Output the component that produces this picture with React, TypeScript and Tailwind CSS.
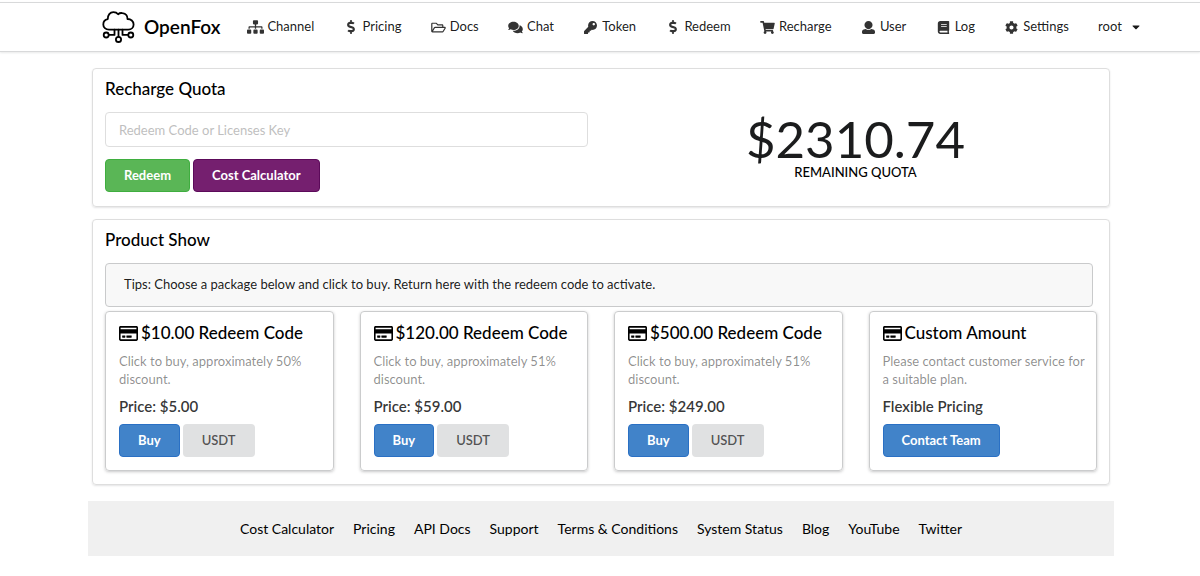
import { useState } from "react";
import {
  FaBook,
  FaCaretDown,
  FaCog,
  FaComments,
  FaDollarSign,
  FaKey,
  FaRegCreditCard,
  FaRegFolderOpen,
  FaShoppingCart,
  FaSitemap,
} from "react-icons/fa";

function UserIcon({ className }: { className?: string }) {
  return (
    <svg viewBox="0 0 512 512" fill="currentColor" className={className}>
      <path d="M256 0c88.366 0 160 71.634 160 160s-71.634 160-160 160S96 248.366 96 160 167.634 0 256 0zm183.283 333.821l-71.313-17.828c-74.923 53.89-165.738 41.864-223.94 0l-71.313 17.828C29.981 344.505 0 382.903 0 426.955V464c0 26.51 21.49 48 48 48h416c26.51 0 48-21.49 48-48v-37.045c0-44.052-29.981-82.45-72.717-93.134z" />
    </svg>
  );
}

const navItems = [
  { label: "Channel", icon: FaSitemap, size: "h-[14px] w-[17px]" },
  { label: "Pricing", icon: FaDollarSign, size: "h-[14px] w-[14px]" },
  { label: "Docs", icon: FaRegFolderOpen, size: "h-[13px] w-[15px]" },
  { label: "Chat", icon: FaComments, size: "h-[13px] w-[15px]" },
  { label: "Token", icon: FaKey, size: "h-[13px] w-[13px]" },
  { label: "Redeem", icon: FaDollarSign, size: "h-[14px] w-[14px]" },
  { label: "Recharge", icon: FaShoppingCart, size: "h-[13px] w-[15px]" },
  { label: "User", icon: UserIcon, size: "h-[13px] w-[13px]" },
  { label: "Log", icon: FaBook, size: "h-[13px] w-[13px]" },
  { label: "Settings", icon: FaCog, size: "h-[13px] w-[13px]" },
];

const products = [
  {
    title: "$10.00 Redeem Code",
    desc: "Click to buy, approximately 50% discount.",
    price: "Price: $5.00",
    actions: ["Buy", "USDT"],
  },
  {
    title: "$120.00 Redeem Code",
    desc: "Click to buy, approximately 51% discount.",
    price: "Price: $59.00",
    actions: ["Buy", "USDT"],
  },
  {
    title: "$500.00 Redeem Code",
    desc: "Click to buy, approximately 51% discount.",
    price: "Price: $249.00",
    actions: ["Buy", "USDT"],
  },
  {
    title: "Custom Amount",
    desc: "Please contact customer service for a suitable plan.",
    price: "Flexible Pricing",
    actions: ["Contact Team"],
  },
];

const footerLinks = [
  "Cost Calculator",
  "Pricing",
  "API Docs",
  "Support",
  "Terms & Conditions",
  "System Status",
  "Blog",
  "YouTube",
  "Twitter",
];

function Logo() {
  return (
    <svg
      viewBox="0 0 33 33"
      className="h-[33px] w-[33px] shrink-0"
      fill="none"
      stroke="#000"
      strokeWidth="1.8"
      strokeLinecap="round"
      strokeLinejoin="round"
    >
      <path d="M7 18.6C3.6 18.6 1.3 16.4 1.3 13.4C1.3 10.6 3.2 8.6 5.8 8.1C5.6 4 8 1.1 11.4 1.1C13.4 1.1 15 1.8 16.1 3.2C17.3 2.2 18.8 1.8 20.4 2.1C23.6 2.6 25.6 5 25.5 8C28.9 7.9 31.6 10.3 31.6 13.5C31.6 16.5 29.4 18.6 26.2 18.6Z" />
      <path d="M16.5 18.6V25.6M12.5 18.6V23.9H7M20.5 18.6V23.9H26" />
      <circle cx="4.2" cy="24" r="2.5" />
      <circle cx="28.8" cy="24" r="2.5" />
      <circle cx="16.5" cy="28.4" r="2.6" />
    </svg>
  );
}

function ActionButton({ label }: { label: string }) {
  if (label === "USDT") {
    return (
      <button
        type="button"
        className="h-[33px] rounded-[4px] bg-[#e0e1e2] px-[19px] text-[13px] font-semibold text-black/65 hover:bg-[#cacbcd]"
      >
        {label}
      </button>
    );
  }
  return (
    <button
      type="button"
      className="h-[33px] rounded-[4px] border border-[#2a70c4] bg-[#4183c9] px-[18px] text-[13px] font-bold text-white hover:bg-[#2a70c4]"
    >
      {label}
    </button>
  );
}

export default function App() {
  const [code, setCode] = useState("");

  return (
    <div className="bg-white pt-0.5 font-[Lato,sans-serif] text-[13px] text-black/90">
      <header className="border-y border-[#d8d9da] shadow-[0_1px_2px_rgba(34,36,38,0.1)]">
        <nav className="mx-auto flex h-12 max-w-[1084px] items-center pl-11">
          <a href="#" className="mr-7 flex items-center gap-[9px]">
            <Logo />
            <span className="text-[19px] font-semibold text-black">
              OpenFox
            </span>
          </a>
          <div className="flex flex-1 items-center justify-between">
            {navItems.map(({ label, icon: Icon, size }) => (
              <a key={label} href="#" className="flex items-center gap-1">
                <span className="flex w-[15px] justify-center text-black/80">
                  <Icon className={`shrink-0 ${size}`} />
                </span>
                {label}
              </a>
            ))}
            <button type="button" className="flex items-center gap-2">
              root
              <FaCaretDown className="h-3 w-3" />
            </button>
          </div>
        </nav>
      </header>

      <div className="mx-auto mt-4 max-w-[1028px] pl-0.5">
        <main className="space-y-3 px-1">
          <section className="grid grid-cols-2 gap-[26px] rounded-[4px] border border-[#dedede] px-3 pt-[9px] pb-[14px] shadow-[0_1px_2px_rgba(34,36,38,0.12)]">
            <form onSubmit={(e) => e.preventDefault()}>
              <h2 className="text-[17px] leading-[22px] font-medium text-black">
                Recharge Quota
              </h2>
              <input
                type="text"
                aria-label="Redeem code"
                placeholder="Redeem Code or Licenses Key"
                value={code}
                onChange={(e) => setCode(e.target.value)}
                className="mt-3 block h-[35px] w-full rounded-[4px] border border-[#dedede] px-[13px] text-[13px] placeholder:text-[#bfbfbf] focus:border-[#85b7d9] focus:outline-none"
              />
              <div className="mt-3 flex gap-[3px]">
                <button
                  type="submit"
                  className="h-[33px] rounded-[4px] border border-[#3fae3f] bg-[#5ab656] px-[18px] text-[13px] font-bold text-white"
                >
                  Redeem
                </button>
                <button
                  type="button"
                  className="h-[33px] rounded-[4px] border border-[#5c0a5a] bg-[#751f6f] px-[18px] text-[13px] font-bold text-white"
                >
                  Cost Calculator
                </button>
              </div>
            </form>
            <div className="flex flex-col items-center justify-center pt-6 text-center">
              <div className="text-[51px] leading-[50px] text-[#1b1c1d]">
                $2310.74
              </div>
              <div className="text-[13px] leading-4 font-medium text-black">
                REMAINING QUOTA
              </div>
            </div>
          </section>

          <section className="rounded-[4px] border border-[#dedede] px-3 pt-[9px] pb-[13px] shadow-[0_1px_2px_rgba(34,36,38,0.12)]">
            <h2 className="text-[17px] leading-[22px] font-medium text-black">
              Product Show
            </h2>
            <div className="mt-3 mr-1 flex h-11 items-center rounded-[4px] border border-[#c9cacb] bg-[#f8f8f8] px-[18px]">
              Tips: Choose a package below and click to buy. Return here with
              the redeem code to activate.
            </div>
            <div className="mt-1 grid grid-cols-4 gap-[26px]">
              {products.map((item) => (
                <article
                  key={item.title}
                  className="rounded-[4px] border border-[#cbcccd] pt-[10px] pr-2 pb-[13px] pl-[13px] shadow-[0_1px_3px_rgba(34,36,38,0.25)]"
                >
                  <h3 className="flex items-center gap-[3px] text-[17px] leading-[22px] font-medium whitespace-nowrap text-black">
                    <FaRegCreditCard className="h-[17px] w-[19px] shrink-0" />
                    {item.title}
                  </h3>
                  <p className="mt-2 leading-[18px] text-black/45">
                    {item.desc}
                  </p>
                  <p className="mt-2 text-[15px] leading-5 font-semibold text-black/80">
                    {item.price}
                  </p>
                  <div className="mt-2 flex gap-[3px]">
                    {item.actions.map((label) => (
                      <ActionButton key={label} label={label} />
                    ))}
                  </div>
                </article>
              ))}
            </div>
          </section>
        </main>

        <footer className="mt-4 flex h-[55px] items-center justify-center gap-[19px] bg-[#f0f0f0] text-[14px] text-black">
          {footerLinks.map((label) => (
            <a key={label} href="#">
              {label}
            </a>
          ))}
        </footer>
      </div>
    </div>
  );
}
